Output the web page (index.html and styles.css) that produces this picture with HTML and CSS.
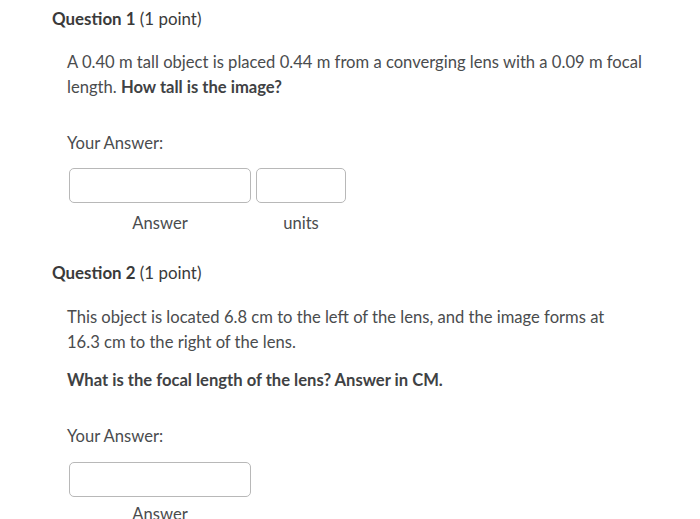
FILE: index.html
```html
<!DOCTYPE html>
<html>
<head>
<meta charset="utf-8">
<link rel="stylesheet" href="styles.css">
</head>
<body>
<div class="page">
  <section class="question q1">
    <h2 class="q-title"><strong>Question 1</strong> (1 point)</h2>
    <div class="q-body">
      <p class="text">A 0.40 m tall object is placed 0.44 m from a converging lens with a 0.09 m focal length. <strong>How tall is the image?</strong></p>
      <p class="your-answer">Your Answer:</p>
      <div class="answer-row">
        <div class="field field-answer">
          <div class="box"></div>
          <div class="label">Answer</div>
        </div>
        <div class="field field-units">
          <div class="box"></div>
          <div class="label">units</div>
        </div>
      </div>
    </div>
  </section>
  <section class="question q2">
    <h2 class="q-title"><strong>Question 2</strong> (1 point)</h2>
    <div class="q-body">
      <p class="text">This object is located 6.8 cm to the left of the lens, and the image forms at<br>16.3 cm to the right of the lens.</p>
      <p class="text bold-line"><strong>What is the focal length of the lens? Answer in CM.</strong></p>
      <p class="your-answer">Your Answer:</p>
      <div class="answer-row">
        <div class="field field-answer">
          <div class="box"></div>
          <div class="label">Answer</div>
        </div>
      </div>
    </div>
  </section>
</div>
</body>
</html>
```

FILE: styles.css
```css
html, body {
  margin: 0;
  padding: 0;
  background: #ffffff;
}
body {
  font-family: Lato, "Open Sans", sans-serif;
  font-size: 16.6px;
  color: #4a4c4e;
}
.page {
  padding: 7px 0 0 52px;
}
.q-title {
  margin: 0;
  font-size: 16.9px;
  line-height: 24px;
  font-weight: normal;
  color: #3a3a3a;
}
.q-title strong {
  font-weight: bold;
}
.q-body {
  padding-left: 15px;
}
.q1 .q-body {
  padding-top: 19px;
}
.q2 {
  margin-top: 26px;
}
.q2 .q-body {
  padding-top: 20px;
}
.text {
  margin: 0;
  width: 590px;
  line-height: 25px;
}
.text strong {
  font-weight: bold;
  color: #3f4244;
}
.bold-line {
  margin-top: 13px;
}
.your-answer {
  margin: 31px 0 0;
  line-height: 24px;
}
.answer-row {
  display: flex;
  gap: 5px;
  margin-top: 13px;
  padding-left: 2px;
}
.q2 .answer-row {
  margin-top: 14px;
}
.field {
  display: flex;
  flex-direction: column;
}
.field-answer {
  width: 182px;
}
.field-units {
  width: 90px;
}
.box {
  height: 35px;
  box-sizing: border-box;
  border: 1px solid #b8b8b8;
  border-radius: 5px;
  background: #fff;
}
.label {
  margin-top: 8px;
  line-height: 24px;
  text-align: center;
}
.q2 .label {
  margin-top: 5px;
}
```
